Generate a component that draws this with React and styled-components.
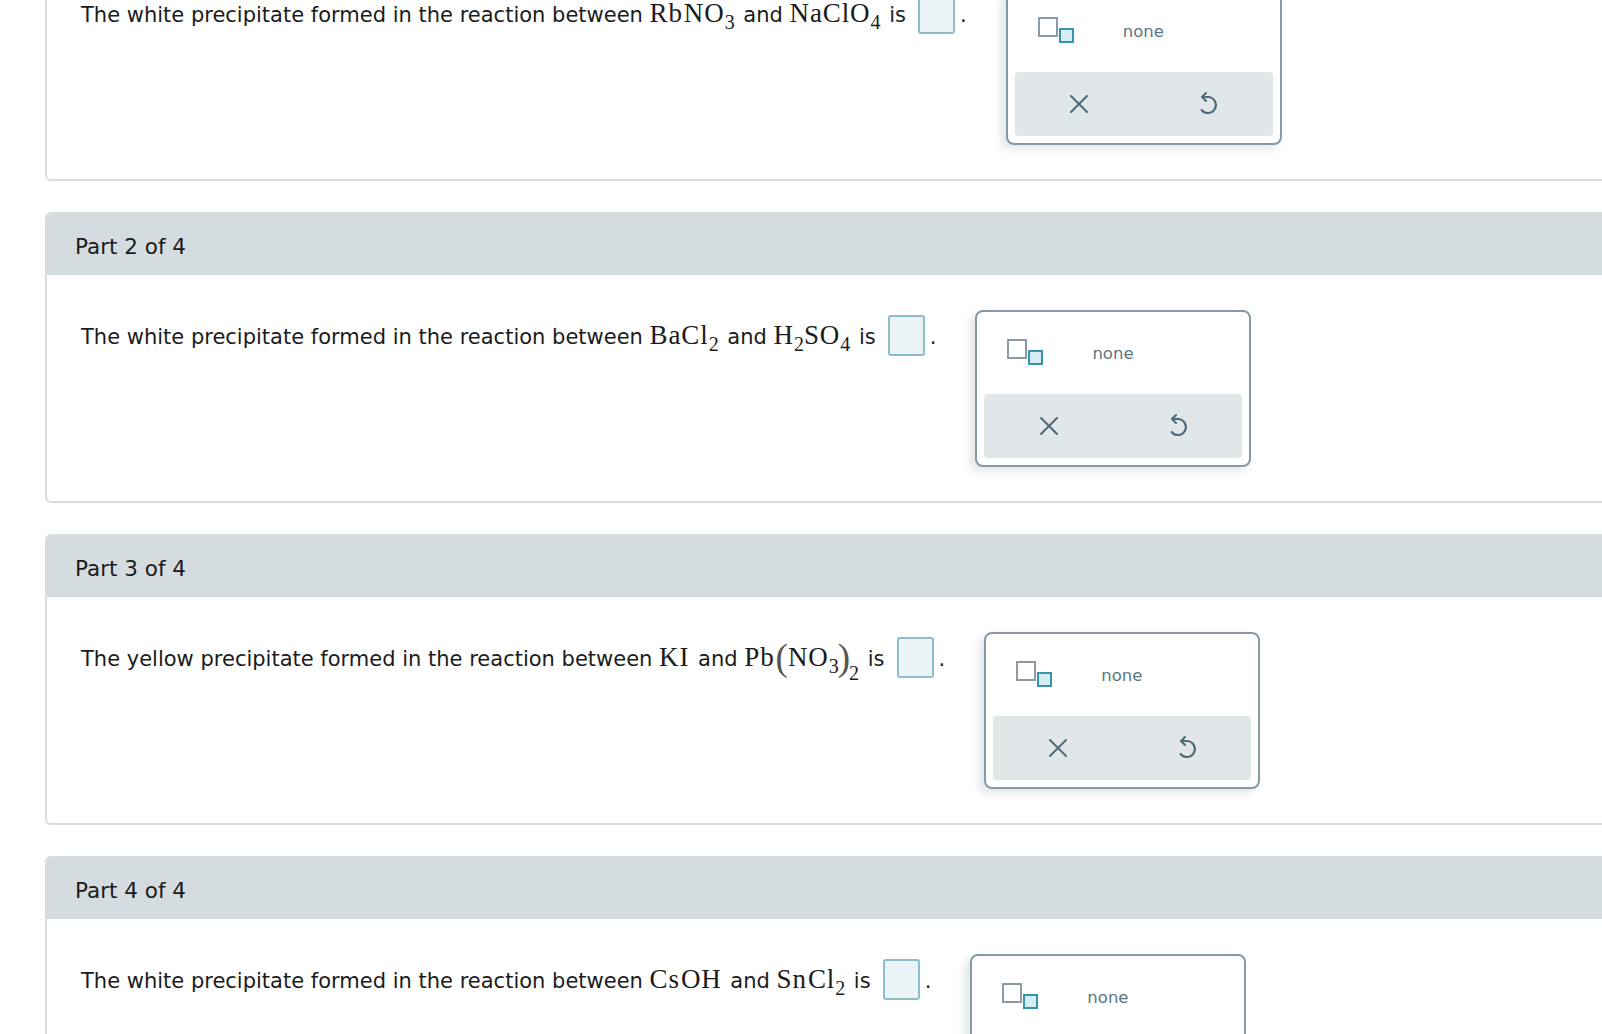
import React from 'react';
import styled, { createGlobalStyle } from 'styled-components';

const Global = createGlobalStyle`
  html, body {
    margin: 0;
    background: #fff;
    overflow: hidden;
  }
  body {
    font-family: "DejaVu Sans", Verdana, sans-serif;
    color: #1b1b1b;
  }
`;

const Page = styled.div`
  margin-top: -110px;
  padding-left: 45px;
  width: 1640px;
`;

const Card = styled.section`
  border: 2px solid #d7dde1;
  border-radius: 6px;
  margin-bottom: 31px;
  overflow: hidden;
`;

const Header = styled.div`
  height: 63px;
  box-sizing: border-box;
  padding: 5px 0 0 30px;
  background: #d5dce0;
  display: flex;
  align-items: center;
  font-size: 21.5px;
  margin: -2px -2px 0;
`;

const Body = styled.div`
  height: 191px;
  padding: 35px 0 0 34px;
  display: flex;
  align-items: flex-start;
`;

const Question = styled.div`
  font-size: 21px;
  line-height: 42px;
  margin-top: 4px;
  white-space: nowrap;
`;

const Formula = styled.span`
  font-family: "Liberation Serif", "Times New Roman", serif;
  font-size: 27px;
  letter-spacing: 0.9px;
  margin-right: 2px;
`;

const Sep = styled.span`
  margin-left: 1px;
`;

const Sub = styled.sub`
  font-size: 20px;
  vertical-align: ${(p) => (p.$low ? '-14px' : '-7px')};
  line-height: 0;
  letter-spacing: 0;
`;

const Paren = styled.span`
  font-family: "Liberation Serif", serif;
  font-size: 37px;
  font-weight: 300;
  color: #555;
  vertical-align: -4px;
  line-height: 0;
  letter-spacing: 0;
  margin: 0 ${(p) => (p.$close ? '-1px' : '0')} 0 ${(p) => (p.$close ? '-1px' : '1px')};
`;

const Blank = styled.span`
  display: inline-block;
  width: 33px;
  height: 37px;
  border: 2px solid #8fbccb;
  background: #eaf4f7;
  border-radius: 3px;
  vertical-align: middle;
  margin: -6px 5px 0 12px;
`;

const Panel = styled.div`
  margin-left: 39px;
  width: 272px;
  height: 153px;
  border: 2px solid #8799a3;
  border-radius: 8px;
  box-shadow: -5px 4px 8px rgba(40, 60, 70, 0.13);
  background: #fff;
  display: flex;
  flex-direction: column;
  flex-shrink: 0;
`;

const PanelTop = styled.div`
  flex: 1;
  display: flex;
  align-items: center;
  padding-left: 29px;
  gap: 48px;
`;

const None = styled.span`
  font-size: 16.5px;
  color: #5c7582;
`;

const Actions = styled.div`
  height: 64px;
  margin: 0 7px 7px;
  background: #e1e6e9;
  border-radius: 4px;
  display: grid;
  grid-template-columns: 1fr 1fr;
  align-items: center;
  justify-items: center;
`;

const TemplateIcon = () => (
  <svg width="38" height="28" viewBox="0 0 38 28">
    <rect x="2" y="1" width="18" height="18" fill="#fff" stroke="#8c9ba3" strokeWidth="2" />
    <rect x="23" y="12" width="13" height="13" fill="#d4ecf2" stroke="#3a93ad" strokeWidth="2" />
  </svg>
);

const CloseIcon = () => (
  <svg width="24" height="24" viewBox="0 0 24 24">
    <path d="M4 4 L20 20 M20 4 L4 20" stroke="#4d6b79" strokeWidth="2" strokeLinecap="round" />
  </svg>
);

const UndoIcon = () => (
  <svg width="24" height="27" viewBox="0 0 24 27" fill="none">
    <path d="M10 2 L6 6 L10 10" stroke="#4d6b79" strokeWidth="2.1" strokeLinecap="round" strokeLinejoin="round" />
    <path d="M6.5 6 H12 A8 8 0 1 1 5.6 19" stroke="#4d6b79" strokeWidth="2.1" strokeLinecap="round" />
  </svg>
);

const AnswerPanel = () => (
  <Panel>
    <PanelTop>
      <TemplateIcon />
      <None>none</None>
    </PanelTop>
    <Actions>
      <CloseIcon />
      <UndoIcon />
    </Actions>
  </Panel>
);

const parts = [
  {
    n: 1,
    color: 'white',
    a: <>Rb<Sep>NO</Sep><Sub>3</Sub></>,
    b: <>NaClO<Sub>4</Sub></>,
  },
  {
    n: 2,
    color: 'white',
    a: <>BaCl<Sub>2</Sub></>,
    b: <>H<Sub>2</Sub>SO<Sub>4</Sub></>,
  },
  {
    n: 3,
    color: 'yellow',
    a: <>KI</>,
    b: <>Pb<Paren>(</Paren>NO<Sub>3</Sub><Paren $close>)</Paren><Sub $low>2</Sub></>,
  },
  {
    n: 4,
    color: 'white',
    a: <>Cs<Sep>OH</Sep></>,
    b: <>Sn<Sep>Cl</Sep><Sub>2</Sub></>,
  },
];

export default function App() {
  return (
    <>
      <Global />
      <Page>
        {parts.map((p) => (
          <Card key={p.n}>
            <Header>Part {p.n} of 4</Header>
            <Body>
              <Question>
                The {p.color} precipitate formed in the reaction between{' '}
                <Formula>{p.a}</Formula> and <Formula>{p.b}</Formula> is
                <Blank />.
              </Question>
              <AnswerPanel />
            </Body>
          </Card>
        ))}
      </Page>
    </>
  );
}
